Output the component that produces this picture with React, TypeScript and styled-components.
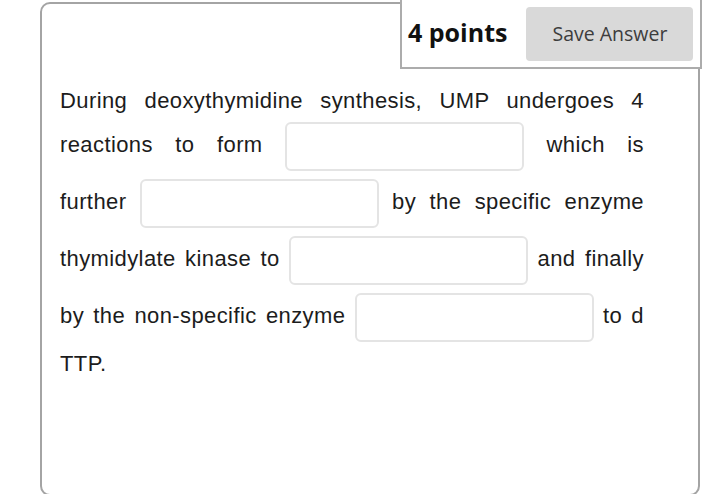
import React from 'react';
import styled, { createGlobalStyle } from 'styled-components';

const GlobalStyle = createGlobalStyle`
  html, body {
    margin: 0;
    padding: 0;
    background: #fff;
  }
  body {
    width: 716px;
    height: 494px;
    overflow: hidden;
  }
`;

const Page = styled.div`
  padding: 2px 0 0 40px;
`;

const Card = styled.div`
  position: relative;
  box-sizing: border-box;
  width: 660px;
  height: 494px;
  border: 2px solid #a4a4a4;
  border-radius: 10px;
  padding: 79px 0 0 18px;
  background: #fff;
`;

const Header = styled.div`
  position: absolute;
  top: -6px;
  right: -4px;
  box-sizing: border-box;
  width: 302px;
  height: 71px;
  display: flex;
  align-items: center;
  gap: 19px;
  padding: 0 6px 0 6px;
  background: #fff;
  border: 2px solid #acacac;
`;

const Points = styled.span`
  margin-top: -4px;
  font-family: 'Open Sans', 'Liberation Sans', sans-serif;
  font-weight: 700;
  font-size: 25px;
  color: #111;
  white-space: nowrap;
`;

const SaveButton = styled.button`
  width: 167px;
  height: 54px;
  border: none;
  border-radius: 4px;
  background: #d9d9d9;
  color: #3d3d3d;
  font-family: 'Open Sans', 'Liberation Sans', sans-serif;
  font-size: 19.5px;
  cursor: pointer;
`;

const Question = styled.div`
  width: 584px;
  font-family: 'Liberation Sans', Arial, sans-serif;
  font-size: 22px;
  letter-spacing: 0.4px;
  line-height: 35px;
  color: #1c1c1c;
`;

const Line = styled.div<{ $last?: boolean }>`
  text-align: ${(p) => (p.$last ? 'left' : 'justify')};
  text-align-last: ${(p) => (p.$last ? 'left' : 'justify')};
  white-space: nowrap;
`;

const Blank = styled.input`
  display: inline-block;
  box-sizing: border-box;
  width: 239px;
  height: 49px;
  margin: 4px 0;
  vertical-align: middle;
  border: 2px solid #e4e4e4;
  border-radius: 6px;
  background: #fff;
  outline: none;
`;

export default function App() {
  return (
    <Page>
      <GlobalStyle />
      <Card>
        <Header>
          <Points>4 points</Points>
          <SaveButton>Save Answer</SaveButton>
        </Header>
        <Question>
          <Line>During deoxythymidine synthesis, UMP undergoes 4</Line>
          <Line>reactions to form <Blank /> which is</Line>
          <Line>further <Blank /> by the specific enzyme</Line>
          <Line>thymidylate kinase to <Blank /> and finally</Line>
          <Line>by the non-specific enzyme <Blank /> to d</Line>
          <Line $last>TTP.</Line>
        </Question>
      </Card>
    </Page>
  );
}
